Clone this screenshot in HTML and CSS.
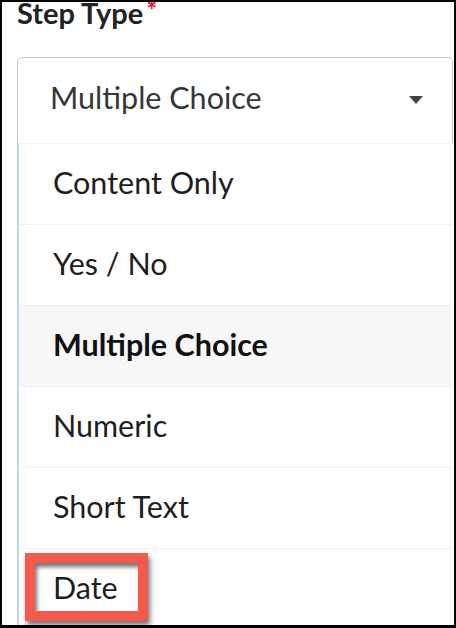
FILE: index.html
```html
<!DOCTYPE html>
<html>
<head>
<meta charset="utf-8">
<link rel="stylesheet" href="styles.css">
</head>
<body>
<div class="frame">
  <div class="field">
    <div class="label">Step Type<span class="req">*</span></div>
    <div class="select">
      <span class="value">Multiple Choice</span>
      <span class="caret"></span>
    </div>
    <ul class="menu">
      <li class="item">Content Only</li>
      <li class="item">Yes / No</li>
      <li class="item selected">Multiple Choice</li>
      <li class="item">Numeric</li>
      <li class="item">Short Text</li>
      <li class="item annotated">Date<span class="callout"></span></li>
    </ul>
  </div>
</div>
</body>
</html>
```
FILE: styles.css
```css
html, body {
  margin: 0;
  padding: 0;
  background: #fff;
}
.frame {
  width: 456px;
  height: 628px;
  box-sizing: border-box;
  border: 2px solid #000;
  border-bottom-width: 3px;
  overflow: hidden;
  background: #fff;
  font-family: Lato, "Open Sans", sans-serif;
}
.field {
  padding-left: 15px;
}
.label {
  font-weight: 700;
  font-size: 29px;
  line-height: 21px;
  height: 21px;
  color: #222;
  margin-bottom: 34px;
}
.req {
  color: #e8161b;
  font-size: 26px;
  line-height: 0;
  margin-left: 3px;
  vertical-align: 4px;
}
.select {
  width: 436px;
  box-sizing: border-box;
  border: 1px solid #c9c9c9;
  border-bottom: none;
  border-radius: 5px 5px 0 0;
  height: 86px;
  padding: 22px 29px 0 32px;
  display: flex;
  justify-content: space-between;
  align-items: flex-start;
  font-size: 30.5px;
  line-height: 34px;
  color: #363636;
}
.caret {
  width: 0;
  height: 0;
  border-left: 7.5px solid transparent;
  border-right: 7.5px solid transparent;
  border-top: 8px solid #444;
  margin-top: 16px;
}
.menu {
  list-style: none;
  margin: 0;
  padding: 0;
  width: 436px;
  box-sizing: border-box;
  border-left: 2px solid #b9d5e8;
}
.item {
  position: relative;
  border-top: 1px solid #f1f1f1;
  padding: 21px 0 25px 34px;
  font-size: 30.5px;
  line-height: 34px;
  color: #1e1e1e;
}
.item.selected {
  background: #f7f7f7;
  font-weight: 700;
  color: #111;
}
.callout {
  position: absolute;
  left: 6px;
  top: 4px;
  width: 123px;
  height: 68px;
  box-sizing: border-box;
  border: 10px solid #f45a4b;
  box-shadow: 2px 4px 5px rgba(0, 0, 0, 0.55), inset 2px 4px 4px rgba(0, 0, 0, 0.55);
}
```
